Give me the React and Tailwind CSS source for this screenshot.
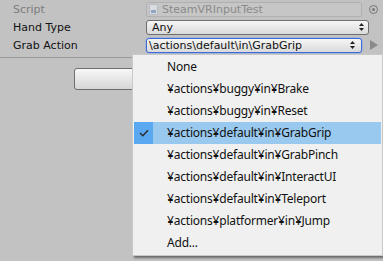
import React from "react";

const items = [
  "None",
  "¥actions¥buggy¥in¥Brake",
  "¥actions¥buggy¥in¥Reset",
  "¥actions¥default¥in¥GrabGrip",
  "¥actions¥default¥in¥GrabPinch",
  "¥actions¥default¥in¥InteractUI",
  "¥actions¥default¥in¥Teleport",
  "¥actions¥platformer¥in¥Jump",
  "Add...",
];

function UpDown() {
  return (
    <svg width="5" height="8" viewBox="0 0 5 8" className="shrink-0">
      <path d="M2.5 0 L5 3 L0 3 Z" fill="#222" />
      <path d="M2.5 8 L5 5 L0 5 Z" fill="#222" />
    </svg>
  );
}

export default function App() {
  return (
    <div
      className="relative w-[383px] h-[261px] overflow-hidden bg-[#c2c2c2]"
      style={{ fontFamily: '"DejaVu Sans", sans-serif' }}
    >
      <div className="flex flex-col pt-[1px]">
        {/* Script row */}
        <div className="flex items-center h-[16px]">
          <div className="w-[146px] pl-[13px] text-[11px] text-[#7d7d7d] leading-none">Script</div>
          <div className="flex items-center w-[216px] h-[15px] border border-[#b0b0b0] bg-[#c6c6c6] rounded-[2px] pl-[2px]">
            <div className="w-[9px] h-[11px] bg-[#d9dde2] border border-[#b8bcc2] rounded-[1px] mr-[4px] flex items-end justify-center">
              <div className="w-[5px] h-[3px] bg-[#8ea4c0] mb-[1px]" />
            </div>
            <span className="text-[11px] text-[#8a8a8a] leading-none">SteamVRInputTest</span>
          </div>
          <div className="ml-[7px] w-[9px] h-[9px] rounded-full border border-[#777] flex items-center justify-center">
            <div className="w-[3px] h-[3px] rounded-full bg-[#777]" />
          </div>
        </div>
        {/* Hand Type row */}
        <div className="flex items-center h-[18px] mt-[1px]">
          <div className="w-[146px] pl-[13px] text-[11px] text-[#111] leading-none">Hand Type</div>
          <div className="flex items-center justify-between w-[223px] h-[15px] border border-[#6e6e6e] rounded-[3px] bg-gradient-to-b from-[#f6f6f6] to-[#dadada] pl-[5px] pr-[4px]">
            <span className="text-[11px] text-[#111] leading-none">Any</span>
            <UpDown />
          </div>
        </div>
        {/* Grab Action row */}
        <div className="flex items-center h-[18px]">
          <div className="w-[146px] pl-[13px] text-[11px] text-[#111] leading-none">Grab Action</div>
          <div className="flex items-center justify-between w-[216px] h-[15px] border border-[#3e6bd4] rounded-[3px] bg-gradient-to-b from-[#f6f6f6] to-[#dadada] pl-[2px] pr-[6px] shadow-[0_0_0_0.5px_#8aa6e6]">
            <span className="text-[11px] text-[#111] leading-none">\actions\default\in\GrabGrip</span>
            <UpDown />
          </div>
          <svg width="8" height="10" viewBox="0 0 8 10" className="ml-[8px]">
            <path d="M0 0 L8 5 L0 10 Z" fill="#8a8a8a" />
          </svg>
        </div>
        <div className="mt-[3px] h-[1px] bg-[#9a9a9a]" />
        <div className="mt-[10px] ml-[74px] w-[90px] h-[22px] border border-[#6e6e6e] rounded-[3px] bg-gradient-to-b from-[#f8f8f8] to-[#d6d6d6]" />
      </div>

      {/* Dropdown menu */}
      <div
        className="absolute left-[132px] top-[54px] w-[251px] h-[202px] bg-[#f0f0f0] border border-[#c8c8c8] shadow-[2px_2px_2px_rgba(0,0,0,0.45)] p-[1px] pt-[1px]"
        style={{ fontFamily: '"Noto Sans", "Noto Sans CJK JP", sans-serif' }}
      >
        {items.map((t) => {
          const sel = t === "¥actions¥default¥in¥GrabGrip";
          return (
            <div key={t} className={`flex items-center h-[22px] ${sel ? "bg-[#99c9ef]" : ""}`}>
              <div className={`w-[19px] h-full flex items-center justify-center ${sel ? "bg-[#5aa9f0]" : ""}`}>
                {sel && (
                  <svg width="10" height="8" viewBox="0 0 10 8">
                    <path d="M1 4 L3.8 6.8 L9 1.2" stroke="#2a2a2a" strokeWidth="1.4" fill="none" />
                  </svg>
                )}
              </div>
              <span className="pl-[14px] text-[12px] text-[#111] leading-none tracking-[-0.2px]">{t}</span>
            </div>
          );
        })}
      </div>
    </div>
  );
}
